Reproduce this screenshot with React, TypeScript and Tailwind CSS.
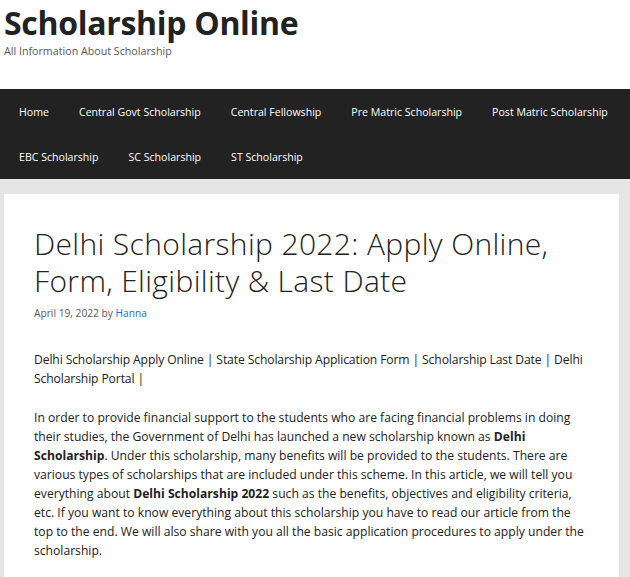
import React from 'react';

const navRows = [
  ['Home', 'Central Govt Scholarship', 'Central Fellowship', 'Pre Matric Scholarship', 'Post Matric Scholarship'],
  ['EBC Scholarship', 'SC Scholarship', 'ST Scholarship'],
];

const App = () => {
  return (
    <div className="min-h-screen bg-[#e5e5e5] font-['Open_Sans',sans-serif] text-[#222222]">
      {/* Site header */}
      <header className="h-[89px] bg-white px-[4px] pt-[1px]">
        <h1 className="text-[32px] font-bold leading-[44px] tracking-[-0.3px]">Scholarship Online</h1>
        <p className="text-[10.7px] leading-[12px] text-[#575760]">All Information About Scholarship</p>
      </header>

      {/* Navigation */}
      <nav className="bg-[#222222] px-[4px]">
        {navRows.map((row, i) => (
          <ul key={i} className="flex">
            {row.map((item) => (
              <li
                key={item}
                className="shrink-0 whitespace-nowrap px-[15px] pt-[1px] text-[10.6px] leading-[44px] text-white"
              >
                {item}
              </li>
            ))}
          </ul>
        ))}
      </nav>

      {/* Article */}
      <div className="pt-[15px] pl-[4px] pr-[11px]">
        <article className="bg-white px-[30px] pt-[31px] pb-[20px]">
          <h2 className="text-[30px] font-light leading-[37px] tracking-[0.35px] text-[#222222]">
            Delhi Scholarship 2022: Apply Online, Form, Eligibility &amp; Last Date
          </h2>
          <div className="mt-[7px] text-[10.2px] leading-[14px] text-[#595959]">
            April 19, 2022 by <span className="text-[#1e73be]">Hanna</span>
          </div>
          <div className="mt-[30px] text-[12.15px] leading-[19px]">
            <p className="mb-[20px] tracking-[-0.12px]">
              Delhi Scholarship Apply Online | State Scholarship Application Form | Scholarship Last Date | Delhi Scholarship Portal |
            </p>
            <p>
              In order to provide financial support to the students who are facing financial problems in doing their studies, the
              Government of Delhi has launched a new scholarship known as <strong>Delhi Scholarship</strong>. Under this scholarship,
              many benefits will be provided to the students. There are various types of scholarships that are included under this
              scheme. In this article, we will tell you everything about <strong>Delhi Scholarship 2022</strong> such as the benefits,
              objectives and eligibility criteria, etc. If you want to know everything about this scholarship you have to read our
              article from the top to the end. We will also share with you all the basic application procedures to apply under the
              scholarship.
            </p>
          </div>
        </article>
      </div>
    </div>
  );
};

export default App;
